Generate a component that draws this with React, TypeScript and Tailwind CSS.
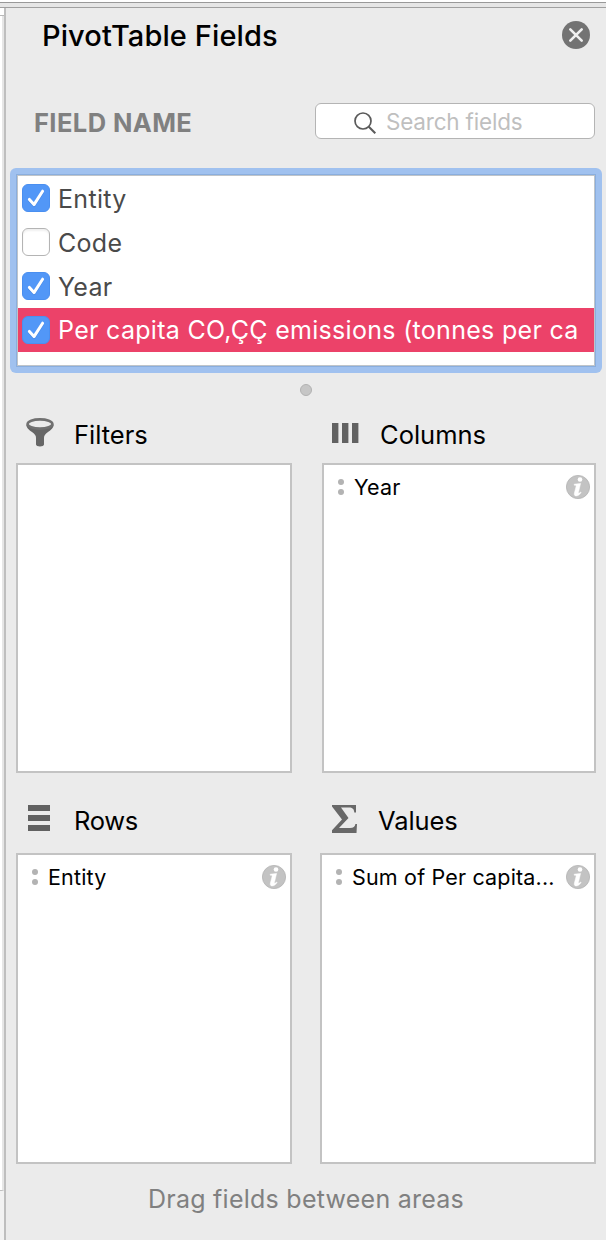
import { useState } from "react";

interface Field {
  name: string;
  checked: boolean;
  selected?: boolean;
}

const initialFields: Field[] = [
  { name: "Entity", checked: true },
  { name: "Code", checked: false },
  { name: "Year", checked: true },
  {
    name: "Per capita CO,ÇÇ emissions (tonnes per ca",
    checked: true,
    selected: true,
  },
];

function CheckBox({ checked }: { checked: boolean }) {
  if (!checked) {
    return (
      <span className="h-7 w-7 shrink-0 rounded-[6px] border border-[#b4b4b4] bg-white shadow-[inset_0_2px_2px_#f0f0f0]" />
    );
  }
  return (
    <span className="h-7 w-7 shrink-0 rounded-[6px] border border-[#4a8ff0] bg-[#5297f7]">
      <svg viewBox="1 1 26 26" className="h-full w-full" fill="none">
        <path
          d="M7.4 16.4 L12 21.6 L20.6 8.2"
          stroke="#4588e6"
          strokeWidth="3"
          strokeLinecap="round"
          strokeLinejoin="round"
        />
        <path
          d="M7.4 15.4 L12 20.6 L20.6 7.2"
          stroke="#fff"
          strokeWidth="3"
          strokeLinecap="round"
          strokeLinejoin="round"
        />
      </svg>
    </span>
  );
}

function InfoIcon() {
  return (
    <svg viewBox="0 0 24 24" className="h-6 w-6 shrink-0">
      <circle cx="12" cy="12" r="11.6" fill="#c3c3c3" stroke="#b4b4b4" strokeWidth="0.8" />
      <circle cx="14" cy="4.5" r="2.3" fill="#fff" />
      <path
        d="M8.2 9.2 L14.6 8.4 L12.4 17.6 C12.2 18.6 13 18.5 14.6 17 L15 17.7 C13.2 20 11.6 21 10 20.9 C8.4 20.8 8 19.6 8.4 18 L10.2 10.9 C10.3 10.3 9.6 10.1 8.2 10.2 Z"
        fill="#fff"
        stroke="#fff"
        strokeWidth="0.5"
      />
    </svg>
  );
}

function FilterIcon() {
  return (
    <svg viewBox="0 0 28 29" className="h-[29px] w-7">
      <path
        d="M0.3 6.5 C0.3 10 3 11.8 6 14 C9 16.2 10 17.5 10 20 L10 26.5 C10 29 18 29 18 26.5 L18 20 C18 17.5 19 16.2 22 14 C25 11.8 27.7 10 27.7 6.5 Z"
        fill="#666"
      />
      <ellipse cx="14" cy="6" rx="12.4" ry="4.6" fill="#ebebeb" stroke="#717171" strokeWidth="2.6" />
    </svg>
  );
}

function ColumnsIcon() {
  return (
    <svg viewBox="0 0 27 20" className="h-5 w-[27px]" fill="#616161">
      <rect x="0" y="0" width="6.4" height="20" />
      <rect x="10" y="0" width="6.4" height="20" />
      <rect x="20" y="0" width="6.4" height="20" />
    </svg>
  );
}

function RowsIcon() {
  return (
    <svg viewBox="0 0 22 26" className="h-[26px] w-[22px]" fill="#616161">
      <rect x="0" y="0" width="22" height="6" />
      <rect x="0" y="10" width="22" height="6" />
      <rect x="0" y="20" width="22" height="6" />
    </svg>
  );
}

function SigmaIcon() {
  return (
    <svg viewBox="0 0 25 28" className="h-7 w-[25px]">
      <path
        d="M0 0 H24 V7.5 H22.3 C22 4 20.5 2.6 17 2.6 H9 L16.5 13 L7 23 H18 C21.5 23 23 21.5 23.4 19 H25 L24.5 28 H0 V25.2 L10 14.5 L0 1.6 Z"
        fill="#686868"
      />
    </svg>
  );
}

function AreaItem({ label }: { label: string }) {
  return (
    <div className="flex h-11 items-center pr-1">
      <div className="flex w-1.5 flex-col gap-1">
        <span className="h-1.5 w-1.5 rounded-full bg-[#b3b3b3]" />
        <span className="h-1.5 w-1.5 rounded-full bg-[#b3b3b3]" />
      </div>
      <span className="ml-[10px] flex-1 whitespace-nowrap pt-0.5 text-[21.5px] leading-none tracking-[0.17px] text-black">
        {label}
      </span>
      <InfoIcon />
    </div>
  );
}

export default function App() {
  const [fields, setFields] = useState(initialFields);

  const toggle = (name: string) => {
    setFields(
      fields.map((f) => (f.name === name ? { ...f, checked: !f.checked } : f))
    );
  };

  return (
    <div className="flex h-[1240px] w-[606px] flex-col overflow-hidden bg-[#ebebeb] font-['Inter',sans-serif]">
      {/* window edge */}
      <div className="h-2 shrink-0 border-b border-[#a0a0a0] bg-white pt-[2px]">
        <div className="h-[5px] border-t border-[#999] bg-[#e6e6e6]" />
      </div>
      <div className="flex flex-1">
        {/* sheet edge */}
        <div className="flex w-1 shrink-0 flex-col">
          <div className="h-2 border-b border-[#b8b8b8] bg-white" />
          <div className="h-[1175px] border-r-2 border-b border-r-[#e6e6e6] border-b-[#c0c0c0] bg-white" />
          <div className="flex-1 bg-[#f2f2f2]" />
        </div>
        <div className="w-[2px] shrink-0 bg-[#bebebe]" />

        <div className="flex flex-1 flex-col">
          {/* Title */}
          <div className="flex h-[54px] items-center justify-between pr-4 pl-9">
            <h1 className="text-[29px] font-medium leading-none tracking-[0.1px] text-black">
              PivotTable Fields
            </h1>
            <svg viewBox="0 0 28 28" className="h-7 w-7">
              <circle cx="14" cy="14" r="14" fill="#737373" />
              <path d="M8.3 8.3 L19.7 19.7 M19.7 8.3 L8.3 19.7" stroke="#f0f0f0" strokeWidth="2.6" strokeLinecap="round" />
            </svg>
          </div>

          {/* Search */}
          <div className="mt-[41px] flex h-9 items-center justify-between pr-[11px] pl-[28px]">
            <h2 className="pt-1 text-[25.5px] font-bold leading-none tracking-[0.4px] text-[#808080]">
              FIELD NAME
            </h2>
            <div className="flex h-9 w-[280px] items-center rounded-[6px] border border-[#b4b4b4] bg-white pl-[38px]">
              <svg viewBox="0 0 22 22" className="mt-[3px] h-[22px] w-[22px]" fill="none" stroke="#5a5a5a" strokeWidth="1.7">
                <circle cx="9" cy="9" r="8" />
                <path d="M14.8 14.8 L21.3 21.3" strokeWidth="2" />
              </svg>
              <span className="ml-[10px] pt-0.5 text-[22.5px] leading-none tracking-[-0.2px] text-[#bfbfbf]">
                Search fields
              </span>
            </div>
          </div>

          {/* Field list */}
          <div className="mt-[29px] mr-1 ml-1 h-[205px] rounded-[6px] bg-[#a0c1ef] p-1.5">
            <div className="h-full border border-[#8aaede]">
              <div className="h-full border border-[#bfc4c9] bg-white">
                {fields.map((field) => (
                  <div
                    key={field.name}
                    onClick={() => toggle(field.name)}
                    className={`flex h-11 items-center pl-1 ${
                      field.selected
                        ? "bg-[#ec4269] text-white"
                        : "text-[#4a4a4a]"
                    }`}
                  >
                    <CheckBox checked={field.checked} />
                    <span
                      className={`ml-2 whitespace-nowrap text-[25px] leading-none tracking-[0.3px] ${
                        field.selected ? "pt-px" : "pt-0.5"
                      }`}
                    >
                      {field.name}
                    </span>
                  </div>
                ))}
              </div>
            </div>
          </div>

          {/* Splitter handle */}
          <div className="mt-[11px] ml-[294px] h-3 w-3 rounded-full border border-[#b2b2b2] bg-[#c6c6c6]" />

          {/* Filters / Columns */}
          <div className="mt-[21px] flex justify-between px-[10px]">
            <div className="w-[276px]">
              <div className="flex h-[46px] pl-[10px]">
                <div className="w-[48px] pt-px">
                  <FilterIcon />
                </div>
                <h3 className="pt-[5px] text-[25.5px] leading-none text-black">Filters</h3>
              </div>
              <div className="h-[310px] border-2 border-[#c3c3c3] bg-white" />
            </div>
            <div className="w-[274px]">
              <div className="flex h-[46px] pl-[10px]">
                <div className="w-[48px] pt-[6px]">
                  <ColumnsIcon />
                </div>
                <h3 className="pt-[5px] text-[25.5px] leading-none text-black">Columns</h3>
              </div>
              <div className="h-[310px] border-2 border-[#c3c3c3] bg-white pl-[14px]">
                <AreaItem label="Year" />
              </div>
            </div>
          </div>

          {/* Rows / Values */}
          <div className="mt-[30px] flex justify-between px-[10px]">
            <div className="w-[276px]">
              <div className="flex h-[50px] pl-3">
                <div className="w-[46px] pt-[2px]">
                  <RowsIcon />
                </div>
                <h3 className="pt-[5px] text-[25.5px] leading-none tracking-[-0.3px] text-black">Rows</h3>
              </div>
              <div className="h-[311px] border-2 border-[#c3c3c3] bg-white pl-[14px]">
                <AreaItem label="Entity" />
              </div>
            </div>
            <div className="w-[276px]">
              <div className="flex h-[50px] pl-3">
                <div className="w-[46px] pt-[2px]">
                  <SigmaIcon />
                </div>
                <h3 className="pt-[5px] text-[25.5px] leading-none tracking-[-0.1px] text-black">Values</h3>
              </div>
              <div className="h-[311px] border-2 border-[#c3c3c3] bg-white pl-[14px]">
                <AreaItem label="Sum of Per capita..." />
              </div>
            </div>
          </div>

          <p className="mt-[23px] pl-[142px] text-[25px] leading-none tracking-[0.25px] text-[#808080]">
            Drag fields between areas
          </p>
        </div>
      </div>
    </div>
  );
}
